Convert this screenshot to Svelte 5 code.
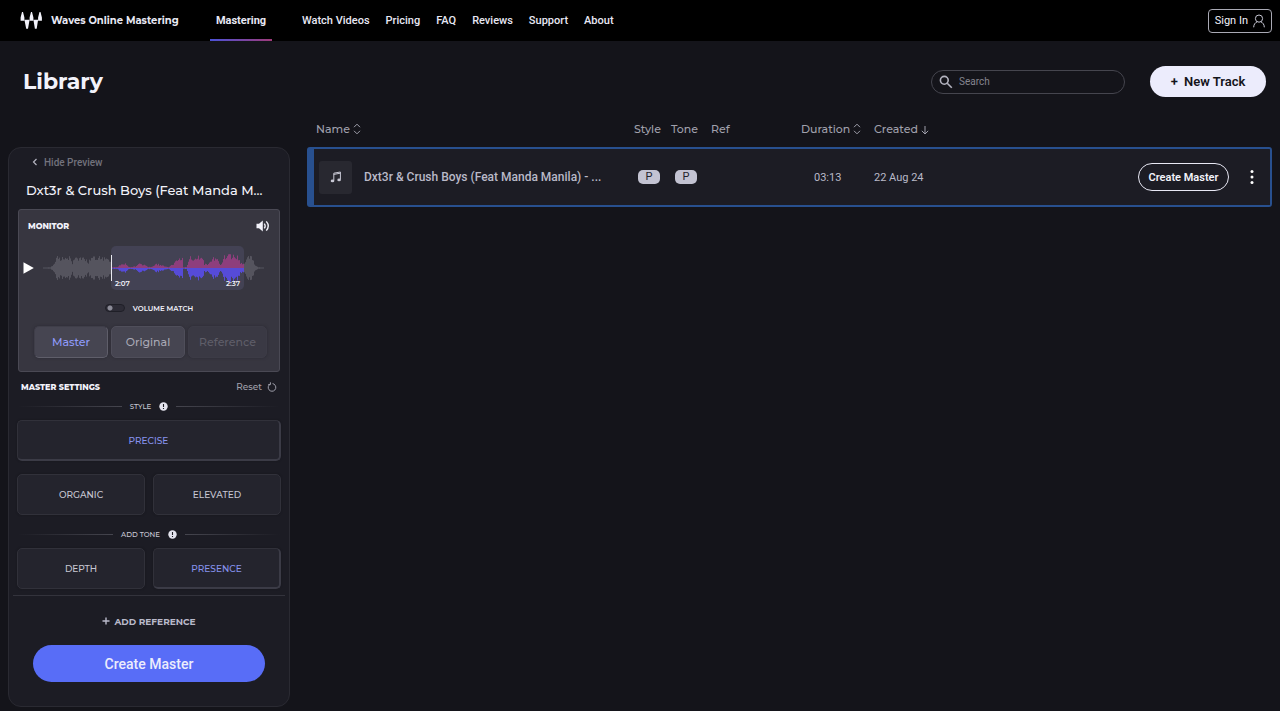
<script>
  const links = ["Watch Videos", "Pricing", "FAQ", "Reviews", "Support", "About"];
  const sources = ["Master", "Original", "Reference"];
  const styles = ["Precise", "Organic", "Elevated"];
  const tones = ["Depth", "Presence"];

  const tracks = [
    {
      name: "Dxt3r & Crush Boys (Feat Manda Manila) - ...",
      style: "P",
      tone: "P",
      duration: "03:13",
      created: "22 Aug 24",
    },
  ];

  let source = $state("Master");
  let style = $state("Precise");
  let tone = $state("Presence");
  let volumeMatch = $state(false);
  let search = $state("");

  // loudness outline of the track: [x, half height]
  const outline = [
    [0, 0], [7, 1], [11, 5], [13, 12], [27, 12], [29, 5], [31, 11], [43, 11],
    [45, 5], [47, 12], [63, 12], [67, 7], [69, 1], [74, 1], [77, 4], [82, 5],
    [86, 1], [92, 2], [95, 5], [101, 4], [105, 1], [110, 2], [113, 5], [118, 3],
    [125, 1], [131, 6], [136, 11], [139, 11], [140, 1], [143, 1], [147, 13],
    [150, 9], [154, 14], [159, 14], [161, 5], [164, 5], [169, 12], [174, 9],
    [177, 4], [181, 13], [186, 14], [194, 14], [197, 6], [201, 5], [203, 13],
    [209, 12], [211, 4], [215, 1], [221, 0],
  ];

  function loudness(x) {
    let i = 1;
    while (i < outline.length - 1 && outline[i][0] < x) i++;
    const [x0, y0] = outline[i - 1];
    const [x1, y1] = outline[i];
    return y0 + ((y1 - y0) * (x - x0)) / (x1 - x0);
  }

  const bars = [];
  for (let x = 0; x < 221; x++) {
    const noise = Math.abs(Math.sin(x * 12.9898) * 43758) % 1;
    const h = Math.max(0.5, loudness(x) * (0.6 + 0.4 * noise));
    bars.push({ x, h, active: x >= 69 && x < 201 });
  }
</script>

{#snippet sorter()}
  <svg class="sorter" viewBox="0 0 8 12" width="8" height="12">
    <path d="M1 4.2 4 1.2 7 4.2M1 7.8 4 10.8 7 7.8" />
  </svg>
{/snippet}

{#snippet divider(label)}
  <div class="divider">
    <span class="line left"></span>
    <span>{label}</span>
    <svg viewBox="0 0 9 9" width="9" height="9">
      <circle cx="4.5" cy="4.5" r="4.2" fill="#e4e4ee" />
      <path d="M4.5 2v3M4.5 6v1" stroke="#1c1c24" stroke-width="1.1" />
    </svg>
    <span class="line right"></span>
  </div>
{/snippet}

<header>
  <a class="brand" href="/">
    <svg viewBox="0 0 22 17" width="22" height="17" fill="#f2f2fa">
      <path d="M2 0H3L4.4 5.5V8.8H0.6V5.5ZM11 0H12L13.4 5.5V8.8H9.6V5.5ZM19.5 0H20.5L21.9 5.5V8.8H18.1V5.5Z" />
      <path d="M4.4 7.8H9.6L8 16.8H6.2ZM13.4 7.8H18.1L16.7 16.8H14.9Z" />
    </svg>
    Waves Online Mastering
  </a>
  <nav>
    <a class="current" href="#mastering">Mastering</a>
    {#each links as link}
      <a href="#{link}">{link}</a>
    {/each}
  </nav>
  <button class="sign-in">
    Sign In
    <svg viewBox="0 0 12 14" width="12" height="14">
      <circle cx="6" cy="4.6" r="3.6" />
      <path d="M0.7 13.3C0.7 10.5 2.2 8.6 4.2 7.8M11.3 13.3C11.3 10.5 9.8 8.6 7.8 7.8" />
    </svg>
  </button>
</header>

<div class="heading">
  <h1>Library</h1>
  <label class="search">
    <svg viewBox="0 0 14 14" width="14" height="14">
      <circle cx="5.3" cy="5.3" r="3.9" />
      <path d="M8.2 8.2 12.8 12.8" />
    </svg>
    <input type="text" placeholder="Search" aria-label="Search" bind:value={search} />
  </label>
  <button class="new-track"><span class="plus">+</span> New Track</button>
</div>

<div class="content">
  <aside>
    <button class="hide">
      <svg viewBox="0 0 6 8" width="6" height="8"><path d="M4.5 1 1.5 4 4.5 7" /></svg>
      Hide Preview
    </button>
    <h2>Dxt3r &amp; Crush Boys (Feat Manda M...</h2>

    <section class="monitor">
      <div class="monitor-head">
        <h3>MONITOR</h3>
        <svg viewBox="0 0 14 12" width="14" height="12">
          <path fill="#f2f2fa" d="M0.5 3.8H3L6.8 0.6V11.4L3 8.2H0.5Z" />
          <path
            fill="none"
            stroke="#f2f2fa"
            stroke-width="1.4"
            d="M8.3 3.6Q10 6 8.3 8.4M10.3 1.4Q14.2 6 10.3 10.6"
          />
        </svg>
      </div>

      <div class="player">
        <button class="play" aria-label="Play">
          <svg viewBox="0 0 11 12" width="11" height="12"><path d="M0.5 0.3 10.8 6 0.5 11.7Z" fill="#fff" /></svg>
        </button>
        <svg class="wave" viewBox="0 0 222 44" width="222" height="44">
          <rect x="68" y="0" width="133" height="44" rx="5" fill="#434254" />
          {#each bars as bar}
            {#if bar.active}
              <rect x={bar.x} y={22 - bar.h} width="1" height={bar.h} fill="#8e3e7c" />
              <rect x={bar.x} y="22" width="1" height={bar.h} fill="#564bd8" />
            {:else}
              <rect x={bar.x} y={22 - bar.h} width="1" height={bar.h * 2} fill="#55545e" />
            {/if}
          {/each}
          <rect x="68" y="9" width="1" height="26" fill="#e8e8f0" />
          <text x="72" y="40">2:07</text>
          <text x="197" y="40" text-anchor="end">2:37</text>
        </svg>
      </div>

      <label class="match">
        <input type="checkbox" bind:checked={volumeMatch} />
        VOLUME MATCH
      </label>

      <div class="sources">
        {#each sources as s}
          <button
            class:selected={source == s}
            disabled={s == "Reference"}
            onclick={() => (source = s)}>{s}</button>
        {/each}
      </div>
    </section>

    <div class="settings-head">
      <h3>MASTER SETTINGS</h3>
      <button class="reset">
        Reset
        <svg viewBox="0 0 10 10" width="10" height="10">
          <path d="M3.2 2.1A3.8 3.8 0 1 0 7 2.2M3.4 0.3V2.6H1.2M7 2.2 5.6 1.5" />
        </svg>
      </button>
    </div>

    {@render divider("STYLE")}
    <div class="options">
      {#each styles as s}
        <button
          class:wide={s == "Precise"}
          class:selected={style == s}
          onclick={() => (style = s)}>{s}</button>
      {/each}
    </div>

    <div class="tones">
      {@render divider("ADD TONE")}
      <div class="options">
        {#each tones as t}
          <button class:selected={tone == t} onclick={() => (tone = t)}>{t}</button>
        {/each}
      </div>
    </div>

    <div class="actions">
      <button class="add">
        <svg viewBox="0 0 8 8" width="8" height="8"><path d="M4 0.5V7.5M0.5 4H7.5" /></svg>
        ADD REFERENCE
      </button>
      <button class="create">Create Master</button>
    </div>
  </aside>

  <main>
    <table>
      <colgroup>
        <col class="c-name" />
        <col class="c-style" />
        <col class="c-tone" />
        <col class="c-ref" />
        <col class="c-duration" />
        <col />
        <col class="c-actions" />
      </colgroup>
      <thead>
        <tr>
          <th>Name {@render sorter()}</th>
          <th>Style</th>
          <th>Tone</th>
          <th>Ref</th>
          <th>Duration {@render sorter()}</th>
          <th>
            Created
            <svg class="sorter" viewBox="0 0 8 10" width="8" height="10">
              <path d="M4 1V9M0.8 5.8 4 9 7.2 5.8" />
            </svg>
          </th>
          <th aria-label="Actions"></th>
        </tr>
      </thead>
      <tbody>
        {#each tracks as track}
          <tr>
            <td>
              <div class="track">
                <span class="cover">
                  <svg viewBox="0 0 12 12" width="12" height="12">
                    <path d="M3.8 9.5V2.2L10.4 1V8.5" fill="none" stroke="#c8c8d4" />
                    <path d="M3.8 3.4 10.4 2.2" stroke="#c8c8d4" />
                    <ellipse cx="2.5" cy="9.9" rx="1.8" ry="1.4" fill="#c8c8d4" />
                    <ellipse cx="9.1" cy="8.9" rx="1.8" ry="1.4" fill="#c8c8d4" />
                  </svg>
                </span>
                <span>{track.name}</span>
              </div>
            </td>
            <td><span class="pill">{track.style}</span></td>
            <td><span class="pill">{track.tone}</span></td>
            <td></td>
            <td class="duration">{track.duration}</td>
            <td>{track.created}</td>
            <td>
              <div class="row-actions">
                <button class="outline">Create Master</button>
                <button class="more" aria-label="More">
                  <svg viewBox="0 0 4 16" width="4" height="16" fill="#fff">
                    <circle cx="2" cy="2.5" r="1.5" />
                    <circle cx="2" cy="8" r="1.5" />
                    <circle cx="2" cy="13.5" r="1.5" />
                  </svg>
                </button>
              </div>
            </td>
          </tr>
        {/each}
      </tbody>
    </table>
  </main>
</div>

<style>
  :global(body) {
    background: #14141a;
    color: #f2f2fa;
    font-family: Roboto, sans-serif;
    font-size: 11px;
  }

  * {
    box-sizing: border-box;
  }

  h1,
  h2,
  h3 {
    margin: 0;
    font-family: Montserrat, Inter, sans-serif;
  }

  svg {
    display: block;
    flex: none;
  }

  button {
    padding: 0;
    border: 0;
    background: none;
    color: inherit;
    font: inherit;
    cursor: pointer;
  }

  header {
    display: flex;
    align-items: center;
    height: 41px;
    padding: 0 8px 0 20px;
    background: #000;
    font-size: 11px;
    font-weight: 500;
  }

  header a {
    color: #e8e8f4;
    text-decoration: none;
  }

  .brand {
    display: flex;
    align-items: center;
    gap: 9px;
    width: 190px;
    font-family: Montserrat, Inter, sans-serif;
    font-size: 10px;
    font-weight: 700;
    white-space: nowrap;
  }

  nav {
    display: flex;
    gap: 16px;
    flex: 1;
    line-height: 41px;
  }

  nav .current {
    width: 62px;
    height: 41px;
    margin-right: 14px;
    text-align: center;
    font-weight: 700;
    border-bottom: 2px solid;
    border-image: linear-gradient(90deg, #4a52d8, #a03a78) 1;
  }

  .sign-in {
    display: flex;
    align-items: center;
    gap: 5px;
    height: 24px;
    padding: 0 6px;
    border: 1px solid #a9a9b4;
    border-radius: 4px;
    font-weight: 400;
  }

  .sign-in svg {
    fill: none;
    stroke: #c8c8d4;
  }

  .heading {
    display: flex;
    align-items: center;
    height: 77px;
    padding: 4px 14px 0 23px;
  }

  h1 {
    flex: 1;
    font-size: 22px;
  }

  .search {
    display: flex;
    align-items: center;
    gap: 6px;
    width: 194px;
    height: 24px;
    padding: 0 7px;
    border: 1px solid #45454e;
    border-radius: 12px;
  }

  .search svg {
    fill: none;
    stroke: #b4b4c0;
    stroke-width: 1.6;
  }

  .search input {
    flex: 1;
    min-width: 0;
    padding: 0;
    border: 0;
    outline: 0;
    background: none;
    color: #e8e8f4;
    font: 10px Roboto, sans-serif;
  }

  .search input::placeholder {
    color: #85858f;
  }

  .new-track {
    width: 116px;
    height: 31px;
    margin-left: 25px;
    border-radius: 16px;
    background: #ececfc;
    color: #14141a;
    font-size: 13px;
    font-weight: 600;
  }

  .plus {
    margin-right: 3px;
  }

  .content {
    display: grid;
    grid-template-columns: 282px 1fr;
    gap: 17px;
    padding: 0 8px 4px;
  }

  aside {
    margin-top: 29px;
    padding: 7px 9px 24px;
    border: 1px solid #2a2a32;
    border-radius: 13px;
    background: #1c1c24;
  }

  .hide {
    display: flex;
    align-items: center;
    gap: 6px;
    height: 14px;
    margin-left: 14px;
    color: #72727c;
    font-size: 10px;
    font-weight: 500;
  }

  .hide svg {
    fill: none;
    stroke: #b4b4c0;
    stroke-width: 1.2;
  }

  h2 {
    margin: 10px 8px 8px;
    font-size: 13px;
    line-height: 22px;
    font-weight: 500;
    white-space: nowrap;
  }

  h3 {
    font-size: 8px;
    font-weight: 800;
  }

  .monitor {
    height: 163px;
    padding: 8px 9px 0;
    border: 1px solid #4a4954;
    border-radius: 3px;
    background: #373640;
  }

  .monitor-head {
    display: flex;
    align-items: center;
    justify-content: space-between;
    height: 16px;
  }

  .player {
    display: flex;
    align-items: center;
    gap: 9px;
    margin: 12px -5px 0;
  }

  .wave text {
    fill: #f2f2fa;
    font: 600 7px Montserrat, Inter, sans-serif;
  }

  .match {
    display: flex;
    align-items: center;
    justify-content: center;
    gap: 8px;
    height: 16px;
    margin-top: 10px;
    font: 600 7px Montserrat, Inter, sans-serif;
  }

  .match input {
    appearance: none;
    width: 20px;
    height: 8px;
    margin: 0;
    border: 1px solid #1f1f27;
    border-radius: 4px;
    background: radial-gradient(circle at 4px 3px, #8c8c98 2px, #2d2c36 3px);
  }

  .sources {
    display: grid;
    grid-template-columns: 74px 74px 79px;
    gap: 3px;
    margin: 10px 6px 0;
    font: 500 11px Montserrat, Inter, sans-serif;
  }

  .sources button {
    height: 32px;
    border: 1px solid #4f4e5a;
    border-radius: 5px;
    background: #464551;
    color: #a9a9b6;
    box-shadow: 0 0 3px #2b2a33;
  }

  .sources .selected {
    border-color: #3f3e49 #5f5e6a #5f5e6a #3f3e49;
    color: #8f9bfa;
  }

  .sources button:disabled {
    border-color: #3c3b46;
    background: #3a3944;
    color: #5f5e69;
  }

  .settings-head {
    display: flex;
    align-items: center;
    justify-content: space-between;
    height: 29px;
    padding: 0 3px;
  }

  .reset {
    display: flex;
    align-items: center;
    gap: 5px;
    color: #a0a0ac;
    font: 500 9px Montserrat, Inter, sans-serif;
  }

  .reset svg {
    fill: none;
    stroke: #a0a0ac;
  }

  .divider {
    display: flex;
    align-items: center;
    gap: 8px;
    height: 10px;
    color: #c8c8d4;
    font: 500 7px Montserrat, Inter, sans-serif;
  }

  .line {
    flex: 1;
    height: 1px;
  }

  .left {
    background: linear-gradient(90deg, #1c1c24, #45454e);
  }

  .right {
    background: linear-gradient(90deg, #45454e, #1c1c24);
  }

  .options {
    display: grid;
    grid-template-columns: 1fr 1fr;
    gap: 13px 8px;
    margin: 9px -1px 0;
    font: 500 9px Montserrat, Inter, sans-serif;
  }

  .options button {
    height: 41px;
    border: 1px solid #31313a;
    border-radius: 5px;
    background: #24242d;
    color: #c8c8d4;
    text-transform: uppercase;
    box-shadow: 0 0 2px #17171d;
  }

  .options .wide {
    grid-column: 1 / 3;
  }

  .options .selected {
    border-right: 2px solid #3b3b46;
    border-bottom: 2px solid #3b3b46;
    color: #8793ee;
  }

  .tones {
    margin-top: 14px;
  }

  .actions {
    display: flex;
    flex-direction: column;
    align-items: center;
    margin: 6px -5px 0;
    padding: 18px 20px 0;
    border-top: 1px solid #33333c;
  }

  .add {
    display: flex;
    align-items: center;
    gap: 4px;
    height: 14px;
    color: #b9b9ca;
    font: 700 9px Montserrat, Inter, sans-serif;
  }

  .add svg {
    stroke: #b9b9ca;
    stroke-width: 1.4;
  }

  .create {
    width: 100%;
    height: 37px;
    margin-top: 17px;
    border-radius: 19px;
    background: #586df7;
    color: #ececfc;
    font-size: 14px;
    font-weight: 500;
  }

  table {
    width: 100%;
    table-layout: fixed;
    border-spacing: 0;
    color: #b9b9c8;
  }

  .c-name {
    width: 327px;
  }

  .c-style {
    width: 37px;
  }

  .c-tone {
    width: 40px;
  }

  .c-ref {
    width: 90px;
  }

  .c-duration {
    width: 73px;
  }

  .c-actions {
    width: 134px;
  }

  th {
    height: 29px;
    padding: 0 0 8px;
    color: #a0a0ac;
    font: 500 11px Montserrat, Inter, sans-serif;
    text-align: left;
    white-space: nowrap;
  }

  th:first-child {
    padding-left: 9px;
  }

  .sorter {
    display: inline-block;
    vertical-align: -2px;
    fill: none;
    stroke: #a0a0ac;
  }

  td {
    height: 60px;
    padding: 0;
    border: solid #28508f;
    border-width: 2px 0;
    background: #1c1c24;
  }

  td:first-child {
    border-left-width: 7px;
    border-radius: 3px 0 0 3px;
  }

  td:last-child {
    border-right-width: 2px;
    border-radius: 0 3px 3px 0;
  }

  .track {
    display: flex;
    align-items: center;
    gap: 12px;
    padding-left: 5px;
    font-size: 12px;
    font-weight: 500;
    white-space: nowrap;
  }

  .cover {
    display: grid;
    place-items: center;
    flex: none;
    width: 33px;
    height: 33px;
    border-radius: 3px;
    background: #282830;
  }

  .pill {
    display: block;
    width: 22px;
    margin-left: 4px;
    border-radius: 5px;
    background: #c3c3d2;
    color: #24242d;
    line-height: 14px;
    text-align: center;
  }

  td.duration {
    padding-left: 13px;
  }

  .row-actions {
    display: flex;
    align-items: center;
    justify-content: space-between;
    padding-right: 16px;
  }

  .outline {
    width: 91px;
    height: 28px;
    border: 1px solid #e8e8f4;
    border-radius: 14px;
    color: #f2f2fa;
    font-weight: 600;
  }
</style>
